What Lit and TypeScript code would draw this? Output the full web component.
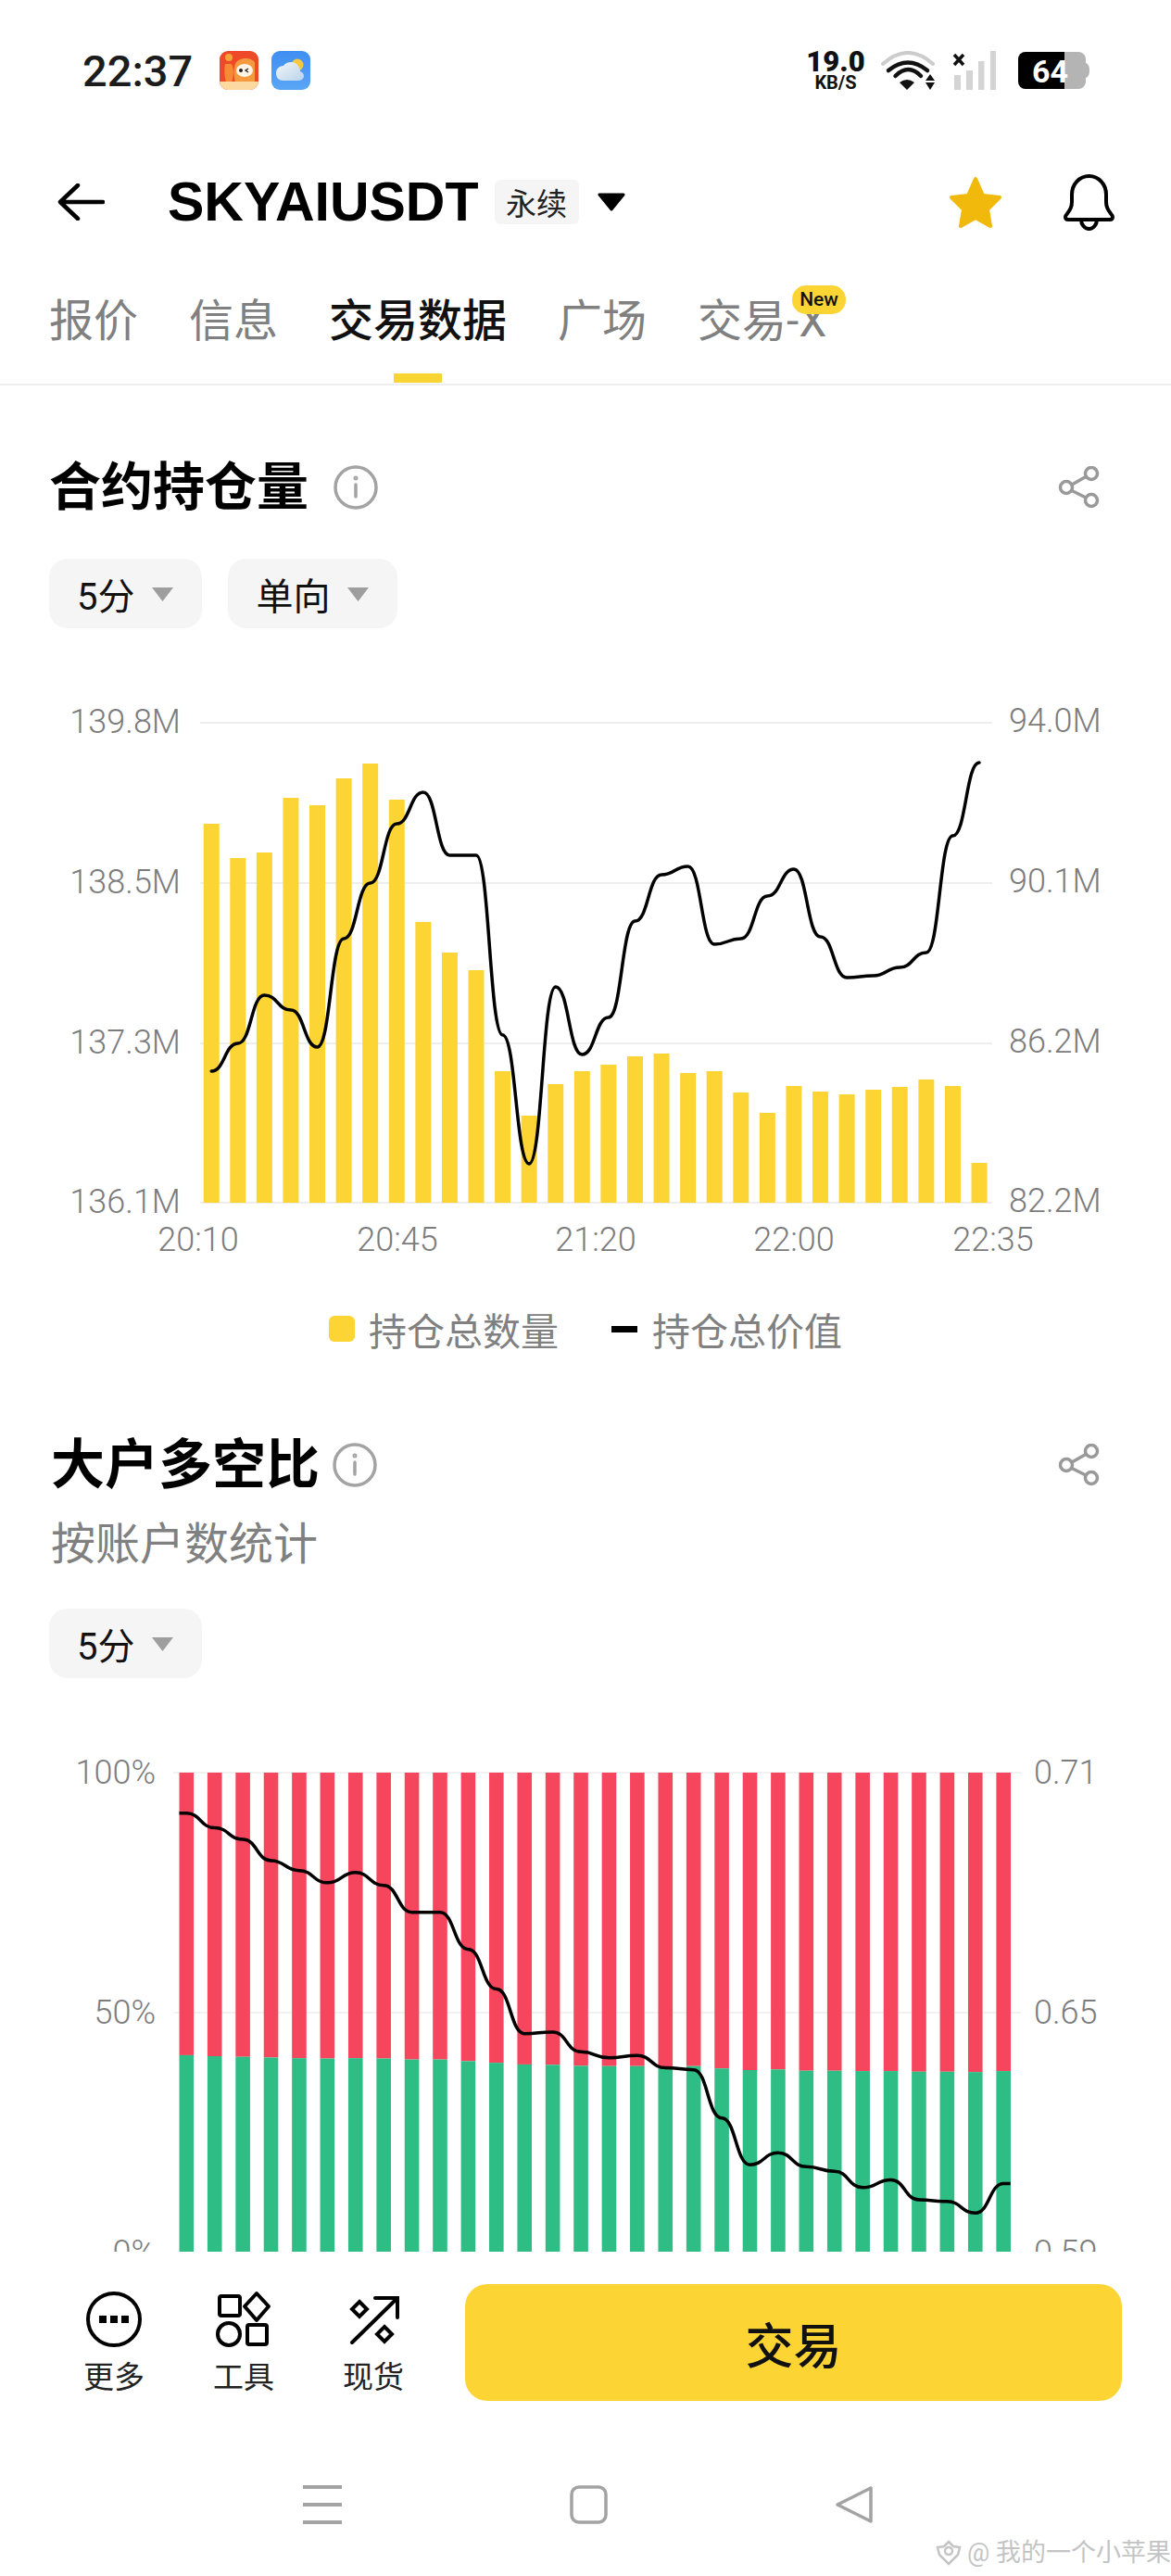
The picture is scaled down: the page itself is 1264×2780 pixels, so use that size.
import {LitElement, html, css, svg} from "lit";
import {customElement} from "lit/decorators.js";

// page coordinates are used inside the charts (viewBox starts at the chart's top)
const oiTops = [889, 926, 920, 861, 869, 840, 824, 863, 995, 1028, 1047, 1156, 1204, 1170, 1156, 1149, 1140, 1137, 1158, 1156, 1179, 1201, 1172, 1178, 1181, 1176, 1173, 1165, 1172, 1255];
const oiLine = [1156, 1126, 1074, 1090, 1130, 1013, 953, 889, 855, 923, 923, 1117, 1256, 1065, 1138, 1098, 994, 944, 935, 1019, 1013, 967, 938, 1011, 1055, 1053, 1044, 1028, 902, 823];

// these two were read off a crop, so they still need the 1860 + v / 2.8 conversion
const ratioSplit = [1005, 1008, 1010, 1012, 1014, 1015, 1014, 1015, 1018, 1018, 1023, 1028, 1033, 1034, 1037, 1038, 1038, 1040, 1038, 1045, 1050, 1048, 1052, 1052, 1053, 1053, 1055, 1055, 1056, 1053].map((v) => 1860 + v / 2.8);
const ratioLine = [274, 318, 353, 417, 447, 484, 453, 492, 573, 573, 685, 805, 940, 935, 995, 1013, 1006, 1043, 1049, 1195, 1336, 1300, 1342, 1356, 1405, 1382, 1442, 1447, 1482, 1393].map((v) => 1860 + v / 2.8);

const smooth = (xs: number[], ys: number[]) => {
  let d = `M${xs[0]} ${ys[0]}`;
  for (let i = 1; i < xs.length; i++) {
    const mid = (xs[i - 1] + xs[i]) / 2;
    d += `C${mid} ${ys[i - 1]} ${mid} ${ys[i]} ${xs[i]} ${ys[i]}`;
  }
  return d;
};

const chevron = html`<svg class="chev" width="25" height="16" viewBox="0 0 25 16"><path d="M1 1h23L12.500 16z" fill="#9e9e9e"/></svg>`;

const info = html`<svg width="48" height="48" viewBox="0 0 48 48" fill="none" stroke="#a3a3a3" stroke-width="3.500" stroke-linecap="round"><circle cx="24" cy="24" r="22"/><path d="M24 21v13"/><circle cx="24" cy="14" r="1" stroke-width="3"/></svg>`;

const share = html`<svg class="share" width="46" height="46" viewBox="0 0 46 46" fill="none" stroke="#999" stroke-width="3.500"><circle cx="36" cy="8" r="6.500"/><circle cx="9" cy="23" r="6.500"/><circle cx="36" cy="37" r="6.500"/><path d="M30 11.500 15 20M15 26.500 30 34"/></svg>`;

@customElement("app-root")
export class AppRoot extends LitElement {
  static styles = css`
    :host {
      display: block;
      position: relative;
      width: 1264px;
      height: 2780px;
      background: #fff;
      overflow: hidden;
      font-family: Roboto, "Noto Sans CJK SC", sans-serif;
      color: #111;
    }
    svg { display: block; flex: none; }

    .status { height: 152px; display: flex; align-items: center; padding: 0 88px 0 89px; }
    .time { font-size: 47px; font-weight: 500; color: #1c1c1c; width: 148px; }
    .apps { display: flex; gap: 14px; }
    .sys { margin-left: auto; display: flex; align-items: center; }
    .speed { width: 64px; display: flex; flex-direction: column; align-items: center; font-weight: 700; color: #111; }
    .speed b { font-size: 31px; line-height: 26px; }
    .speed span { font-size: 20px; line-height: 18px; }
    .wifi { margin-left: 17px; }
    .signal { margin-left: 19px; }
    .battery { margin-left: 23px; }

    .head { height: 132px; display: flex; align-items: center; padding: 0 60px 0 62px; }
    .symbol { margin-left: 68px; font-family: "Liberation Sans", sans-serif; font-size: 59px; font-weight: 700; color: #000; }
    .tag { margin-left: 17px; width: 91px; height: 48px; background: #f5f5f5; border-radius: 6px; display: flex; align-items: center; justify-content: center; font-size: 33px; color: #222; }
    .caret { margin-left: 20px; }
    .star { margin-left: auto; }
    .bell { margin-left: 65px; }

    .tabs { height: 130px; display: flex; gap: 55px; padding: 0 53px; border-bottom: 2px solid #eee; }
    .tab { position: relative; display: flex; flex-direction: column; padding-top: 33px; font-size: 48px; line-height: 60px; color: #808080; }
    .tab.on { color: #111; font-weight: 500; }
    .tab.on::after { content: ""; align-self: center; width: 52px; height: 10px; margin-top: 26px; background: #f9d533; }
    .new { position: absolute; left: 102px; top: 24px; width: 58px; height: 31px; border-radius: 15px; background: #fcd535; color: #111; font-size: 21px; line-height: 31px; font-weight: 500; text-align: center; }

    .scroll { height: 2014px; overflow: hidden; }
    .title-row { display: flex; align-items: center; height: 70px; padding: 0 76px 0 53px; }
    .title-row .share { margin-left: auto; }
    .title { font-weight: 700; color: #000; line-height: 70px; }
    .oi { margin-top: 75px; }
    .oi .title { font-size: 56px; margin-right: 27px; }
    .lsr { margin-top: 78px; }
    .lsr .title { font-size: 58px; margin-left: 2px; margin-right: 14px; }
    .sub { margin: 21px 0 0 55px; font-size: 48px; line-height: 60px; color: #808080; }
    .chips { display: flex; gap: 28px; padding-left: 53px; }
    .chips.first { margin-top: 42px; }
    .chips.second { margin-top: 39px; }
    .chip { height: 75px; padding: 0 30px; display: flex; align-items: center; gap: 18px; background: #f5f5f5; border-radius: 20px; font-size: 40px; color: #111; }
    .chart-a { margin-top: 62px; }
    .chart-b { margin-top: 68px; }
    text { font-family: Roboto, sans-serif; font-weight: 300; font-size: 36px; fill: #7c7c7c; }

    .legend { height: 68px; display: flex; align-items: center; justify-content: center; font-size: 41px; color: #808080; }
    .dot { width: 28px; height: 28px; border-radius: 6px; background: #fcd535; margin-right: 15px; }
    .dash { width: 28px; height: 7px; background: #000; margin: 0 16px 0 57px; }

    .actions { display: flex; padding: 35px 53px 0; }
    .tool { width: 140px; display: flex; flex-direction: column; align-items: center; padding-top: 7px; font-size: 33px; line-height: 44px; color: #222; }
    .tool span { margin-top: 10px; }
    .trade { margin-left: 29px; width: 709px; height: 126px; border-radius: 24px; background: #fcd535; display: flex; align-items: center; justify-content: center; font-size: 52px; font-weight: 500; color: #111; }

    .nav { display: flex; gap: 246px; padding: 91px 0 0 327px; }

    .mark { position: absolute; right: 0; bottom: 10px; display: flex; align-items: center; color: #c4c4c4; font-size: 27px; line-height: 30px; }
    .mark svg { margin-right: 6px; }
  `;

  private barChart() {
    const pitch = 28.58;
    const xs = oiLine.map((_, i) => 228.2 + pitch * i);
    const grid = [780, 953, 1126, 1298];
    const left = ["139.8M", "138.5M", "137.3M", "136.1M"];
    const right = ["94.0M", "90.1M", "86.2M", "82.2M"];
    const times = [["20:10", 214], ["20:45", 429], ["21:20", 643], ["22:00", 857], ["22:35", 1072]];
    return html`<svg class="chart-a" width="1264" height="660" viewBox="0 740 1264 660">
      ${grid.map((y) => svg`<rect x="216" y=${y - 1} width="855" height="2" fill="#eee"/>`)}
      ${oiTops.map((top, i) => svg`<rect x=${xs[i] - 8.500} y=${top} width="17" height=${1298 - top} fill="#fcd535"/>`)}
      <path d=${smooth(xs, oiLine)} fill="none" stroke="#000" stroke-width="3.500" stroke-linecap="round"/>
      ${grid.map((y, i) => svg`<text x="195" y=${y + 11} text-anchor="end">${left[i]}</text><text x="1089" y=${y + 10}>${right[i]}</text>`)}
      ${times.map(([t, x]) => svg`<text x=${x} y="1350" text-anchor="middle">${t}</text>`)}
    </svg>`;
  }

  private ratioChart() {
    const pitch = 30.41;
    const xs = ratioLine.map((_, i) => 201.3 + pitch * i);
    const grid = [1914, 2173];
    const line = smooth(xs, ratioLine);
    return html`<svg class="chart-b" width="1264" height="580" viewBox="0 1880 1264 580">
      ${grid.map((y) => svg`<rect x="187" y=${y - 1} width="915" height="2" fill="#f2f2f2"/>`)}
      ${ratioSplit.map((split, i) => svg`
        <rect x=${xs[i] - 7.800} y="1914" width="15.600" height=${split - 1914} fill="#f6465d"/>
        <rect x=${xs[i] - 7.800} y=${split} width="15.600" height=${2432 - split} fill="#2ebd85"/>`)}
      <path d=${`M193.500 ${ratioLine[0]}H201.300${line.slice(line.indexOf("C"))}H1090.700`} fill="none" stroke="#000" stroke-width="3.500"/>
      <text x="168" y="1926" text-anchor="end">100%</text>
      <text x="168" y="2185" text-anchor="end">50%</text>
      <text x="168" y="2444" text-anchor="end">0%</text>
      <text x="1116" y="1926">0.71</text>
      <text x="1116" y="2185">0.65</text>
      <text x="1116" y="2444">0.59</text>
    </svg>`;
  }

  private statusBar() {
    return html`<div class="status">
      <div class="time">22:37</div>
      <div class="apps">
        <svg width="42" height="42" viewBox="0 0 42 42">
          <defs><clipPath id="r"><rect width="42" height="42" rx="9"/></clipPath></defs>
          <g clip-path="url(#r)">
            <rect width="42" height="42" fill="#ee4a2a"/>
            <circle cx="10" cy="7" r="4" fill="#f7a33a"/>
            <path d="M6 14h7c3 6 2 14 0 20H7c-2-7-2-14-1-20z" fill="#f78b35"/>
            <path d="M17 14c3-7 16-8 21-2v22H17c-2-7-2-14 0-20z" fill="#f59a3e"/>
            <ellipse cx="27" cy="21" rx="9" ry="7" fill="#fff3e4"/>
            <circle cx="23" cy="21" r="2" fill="#222"/><path d="M31 19l-3 2 3 2" fill="none" stroke="#222" stroke-width="1.300"/>
            <rect y="33" width="42" height="9" fill="#fbd9a0"/>
          </g>
        </svg>
        <svg width="42" height="42" viewBox="0 0 42 42">
          <defs>
            <linearGradient id="b" x1="0" y1="0" x2="0" y2="1"><stop offset="0" stop-color="#3f8ef2"/><stop offset="1" stop-color="#5aa6f6"/></linearGradient>
            <linearGradient id="c" x1="0" y1="0" x2="1" y2="1"><stop offset="0" stop-color="#f4f6f8"/><stop offset="1" stop-color="#b9d3ec"/></linearGradient>
          </defs>
          <rect width="42" height="42" rx="9" fill="url(#b)"/>
          <circle cx="28" cy="15" r="6.500" fill="#f7c93e"/>
          <path d="M13 32c-5 0-8-3-8-8s4-8 8-8c2-3 5-4 8-4 6 0 10 5 10 10 3 1 4 3 4 5s-2 5-6 5z" fill="url(#c)"/>
        </svg>
      </div>
      <div class="sys">
        <div class="speed"><b>19.0</b><span>KB/S</span></div>
        <svg class="wifi" width="58" height="42" viewBox="0 0 58 42" fill="none" stroke-linecap="round">
          <path d="M2 14Q29-10 56 14" stroke="#ccc" stroke-width="4"/>
          <path d="M8 21Q29 4 50 21" stroke="#111" stroke-width="4.500"/>
          <path d="M15.500 27Q29.500 13 43 27" stroke="#111" stroke-width="4.500"/>
          <path d="M20 34Q28 28 36 34L28 42z" fill="#111"/>
          <path d="M53 25l5 7H48zM48 34h10l-5 8z" fill="#111"/>
        </svg>
        <svg class="signal" width="48" height="42" viewBox="0 0 48 42">
          <path d="M2 42V26h7v16zM15 42V21h7v21zM28 42V11h6.500v31zM41 42V0h6v42z" fill="#d4d4d4"/>
          <path d="M2 4l10 11M12 4 2 15" stroke="#111" stroke-width="3.500" fill="none"/>
        </svg>
        <svg class="battery" width="77" height="40" viewBox="0 0 77 40">
          <defs><clipPath id="bt"><rect width="73" height="40" rx="8"/></clipPath></defs>
          <path d="M73 12c3 1 4 4 4 8s-1 7-4 8z" fill="#b4b4b4"/>
          <g clip-path="url(#bt)"><rect width="73" height="40" fill="#b4b4b4"/><rect width="50" height="40" fill="#000"/></g>
          <text x="15" y="33" style="font-size:34px;font-weight:700;fill:#fff">64</text>
        </svg>
      </div>
    </div>`;
  }

  private header() {
    return html`<div class="head">
      <svg width="51" height="40" viewBox="0 0 51 40" fill="none" stroke="#000" stroke-width="4.500" stroke-linecap="round" stroke-linejoin="round"><path d="M49 20H3M22 2 3 20l19 18"/></svg>
      <div class="symbol">SKYAIUSDT</div>
      <div class="tag">永续</div>
      <svg class="caret" width="30" height="20" viewBox="0 0 30 20"><path d="M2 2h26L15 18z" fill="#000" stroke="#000" stroke-width="3" stroke-linejoin="round"/></svg>
      <svg class="star" width="58" height="57" viewBox="0 0 58 57"><path d="M29 3l8 18 18 2-13 13 3 18-16-9-16 9 3-18L3 23l18-2z" fill="#f0b90b" stroke="#f0b90b" stroke-width="4" stroke-linejoin="round"/></svg>
      <svg class="bell" width="57" height="61" viewBox="0 0 57 61" fill="none" stroke="#000" stroke-width="4" stroke-linejoin="round"><path d="M3 46c0-3 7-6 7-16V22C10 11 18 2 28.500 2S47 11 47 22v8c0 10 7 13 7 16 0 2-1 3-3 3H6c-2 0-3-1-3-3z"/><path d="M20 49a8.500 10 0 0 0 17 0"/></svg>
    </div>`;
  }

  private bottom() {
    return html`<div class="actions">
      <div class="tool">
        <svg width="62" height="62" viewBox="0 0 62 62"><circle cx="31" cy="31" r="28" fill="none" stroke="#000" stroke-width="4"/><path d="M15 27h8v8h-8zM27 27h8v8h-8zM39 27h8v8h-8z" fill="#000"/></svg>
        <span>更多</span>
      </div>
      <div class="tool">
        <svg width="62" height="62" viewBox="233 2471 62 62" fill="none" stroke="#000" stroke-width="4" stroke-linejoin="round"><rect x="238" y="2477" width="22" height="21" rx="2"/><path d="M278 2474l13 14-13 15-13-15z"/><circle cx="248" cy="2518" r="12"/><rect x="268" y="2508" width="21" height="21" rx="2"/></svg>
        <span>工具</span>
      </div>
      <div class="tool">
        <svg width="62" height="62" viewBox="372 2471 62 62" fill="none" stroke="#000" stroke-width="4" stroke-linecap="round"><path d="M380 2527 428 2480M405 2479h24v21"/><path d="M388 2483l8 8-8 8-8-8zM415 2510l8 8-8 8-8-8z"/></svg>
        <span>现货</span>
      </div>
      <div class="trade">交易</div>
    </div>
    <div class="nav">
      <svg width="42" height="42" viewBox="0 0 42 42" fill="#a3a3a3"><path d="M0 0h42v4H0zM0 19h42v4H0zM0 38h42v4H0z"/></svg>
      <svg width="41" height="42" viewBox="0 0 41 42" fill="none" stroke="#a3a3a3" stroke-width="3.500"><rect x="2" y="2" width="37" height="38" rx="8"/></svg>
      <svg width="40" height="42" viewBox="0 0 40 42" fill="none" stroke="#a3a3a3" stroke-width="3.500" stroke-linejoin="round"><path d="M38 3v36L2 21z"/></svg>
    </div>
    <div class="mark">
      <svg width="28" height="28" viewBox="0 0 28 28" fill="none" stroke="#c4c4c4" stroke-width="2.500"><path d="M14 2l5 5 7 1-2 8-10 10L4 16 2 8l7-1z"/><circle cx="14" cy="12" r="4"/></svg>
      <span>@ 我的一个小苹果</span>
    </div>`;
  }

  render() {
    return html`
      ${this.statusBar()}
      ${this.header()}
      <div class="tabs">
        <div class="tab">报价</div>
        <div class="tab">信息</div>
        <div class="tab on">交易数据</div>
        <div class="tab">广场</div>
        <div class="tab">交易-X<div class="new">New</div></div>
      </div>
      <div class="scroll">
        <div class="title-row oi"><div class="title">合约持仓量</div>${info}${share}</div>
        <div class="chips first">
          <div class="chip">5分${chevron}</div>
          <div class="chip">单向${chevron}</div>
        </div>
        ${this.barChart()}
        <div class="legend">
          <div class="dot"></div>持仓总数量
          <div class="dash"></div>持仓总价值
        </div>
        <div class="title-row lsr"><div class="title">大户多空比</div>${info}${share}</div>
        <div class="sub">按账户数统计</div>
        <div class="chips second"><div class="chip">5分${chevron}</div></div>
        ${this.ratioChart()}
      </div>
      ${this.bottom()}
    `;
  }
}
